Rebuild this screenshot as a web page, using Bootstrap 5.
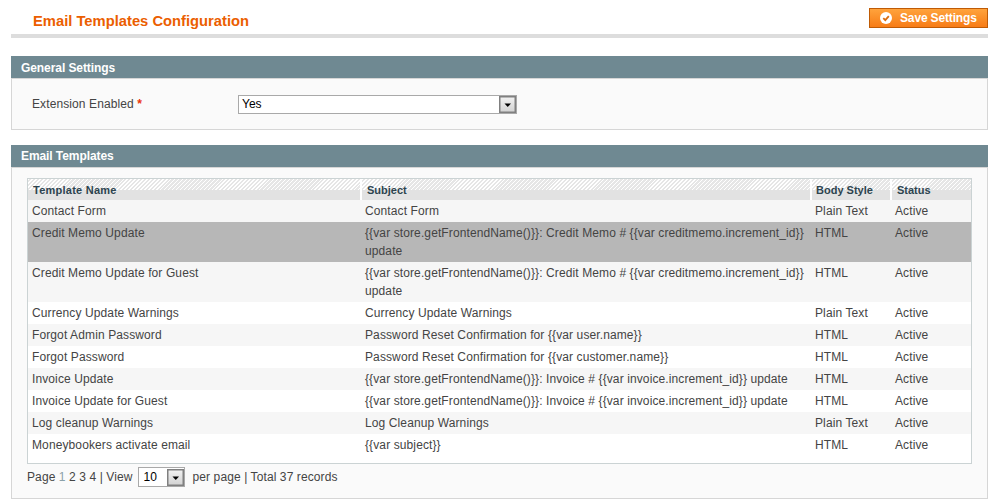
<!DOCTYPE html>
<html lang="en">
<head>
<meta charset="utf-8">
<title>Email Templates Configuration</title>
<link href="https://cdn.jsdelivr.net/npm/bootstrap@5.3.0/dist/css/bootstrap.min.css" rel="stylesheet">
<style>
:root{--pick:url("data:image/svg+xml,%3Csvg xmlns='http://www.w3.org/2000/svg' width='17' height='17'%3E%3Cdefs%3E%3ClinearGradient id='g' x1='0' y1='0' x2='0' y2='1'%3E%3Cstop offset='0' stop-color='%23f2f2f2'/%3E%3Cstop offset='1' stop-color='%23d2d2d2'/%3E%3C/linearGradient%3E%3C/defs%3E%3Crect x='.75' y='.75' width='15.500' height='15.500' fill='url(%23g)' stroke='%23808080' stroke-width='1.500'/%3E%3Cpath d='M5.500 7.500h6.500l-3.250 3.500z' fill='%23000'/%3E%3C/svg%3E");}
html,body{background:#fff;}
body{font-family:"Liberation Sans",Arial,sans-serif;font-size:12px;color:#444;line-height:1.25;}
.page-wrap{padding:0 9px 0 11px;height:502px;overflow:hidden;}
.title-row{height:38px;border-bottom:4px solid #ddd;padding:8px 0 0 22px;}
.title-row h3{font-size:14.75px;font-weight:700;color:#eb5e00;margin:5px 0 0;line-height:17px;}
.save-btn{width:119px;height:20px;padding:0 0 0 10px;border:1px solid #bf5b05;border-radius:0;background:linear-gradient(#ffa33c,#f77c16);color:#fff;font-size:12px;font-weight:700;letter-spacing:-.15px;line-height:18px;display:flex;align-items:center;gap:8px;}
.save-btn:hover{background:linear-gradient(#ffa33c,#f77c16);color:#fff;border-color:#bf5b05;}
.sect-head{height:23px;background:#6f8992;border-bottom:1px solid #d6d6d6;color:#fff;font-weight:700;font-size:12px;letter-spacing:-.08px;line-height:22px;padding-left:10px;}
.sect-body{background:#fafafa;border:1px solid #d6d6d6;border-top:0;}
.first-sect{margin-top:18px;}
.first-sect .sect-head{line-height:24px;}
.first-sect .sect-body{height:51px;padding:16px 0 0 20px;}
.second-sect{margin-top:15px;}
.second-sect .sect-body{height:331px;padding:10px 15px 0 15px;}
.field-label{width:206px;line-height:19px;letter-spacing:.1px;}
.field-label span{color:#eb340a;font-weight:700;}
.pick-select{appearance:none;-webkit-appearance:none;border:1px solid #a9a9a9;border-radius:0;background:#fff var(--pick) no-repeat right 0 center;color:#000;font:12px "Liberation Sans",Arial,sans-serif;padding:0 0 0 3px;outline:0;}
.wide-pick{width:279px;height:19px;line-height:17px;}
.small-pick{width:47px;height:20px;padding-left:5px;margin:0 8px 0 5px;}
.grid-box{border:1px solid #cbd3d4;background:#fff;height:286px;}
.tpl-table{margin:0;table-layout:fixed;width:100%;--bs-table-bg:transparent;--bs-table-color:#444;color:#444;font-size:12px;letter-spacing:.11px;line-height:18px;border-collapse:collapse;}
.tpl-table th{height:21px;padding:1px 0 0 5px;font-size:11px;font-weight:700;color:#2d444f;letter-spacing:0;line-height:20px;border:0;border-left:2px solid #fff;background:linear-gradient(#e2e2e2,#e2e2e2) no-repeat 0 100%/100% 10px,repeating-linear-gradient(135deg,#fff 0 1px,#e6e6e6 1px 2.800px);}
.tpl-table th:first-child{border-left:0;letter-spacing:.25px;}
.tpl-table th:nth-child(3){padding-left:4px;}
.tpl-table td{padding:2px 4px 2px 4px;border:0;vertical-align:top;background:#f6f6f6;box-shadow:none;}
.tpl-table tbody tr:nth-child(even) td{background:#fff;}
.tpl-table tbody tr.row-on td{background:#b7b7b7;}
.pager-row{margin-top:3px;height:20px;display:flex;align-items:center;color:#444;letter-spacing:.1px;}
.pager-row b{font-weight:400;color:#8aa0a8;}
</style>
</head>
<body>
<div class="page-wrap">
  <div class="title-row d-flex justify-content-between align-items-start">
    <h3>Email Templates Configuration</h3>
    <button type="button" class="btn save-btn">
      <svg width="12" height="12" viewBox="0 0 12 12" aria-hidden="true"><circle cx="6" cy="6" r="6" fill="#fff"/><path d="M3.300 6.100l2 2 3.500-4" fill="none" stroke="#d96c10" stroke-width="1.800"/></svg>
      Save Settings
    </button>
  </div>

  <section class="first-sect">
    <div class="sect-head">General Settings</div>
    <div class="sect-body d-flex">
      <div class="field-label">Extension Enabled <span>*</span></div>
      <select class="pick-select wide-pick"><option>Yes</option><option>No</option></select>
    </div>
  </section>

  <section class="second-sect">
    <div class="sect-head">Email Templates</div>
    <div class="sect-body">
      <div class="grid-box">
        <table class="table tpl-table">
          <colgroup><col style="width:333px"><col style="width:450px"><col style="width:80px"><col style="width:80px"></colgroup>
          <thead><tr><th>Template Name</th><th>Subject</th><th>Body Style</th><th>Status</th></tr></thead>
          <tbody>
            <tr><td>Contact Form</td><td>Contact Form</td><td>Plain Text</td><td>Active</td></tr>
            <tr class="row-on"><td>Credit Memo Update</td><td>{{var store.getFrontendName()}}: Credit Memo # {{var creditmemo.increment_id}} update</td><td>HTML</td><td>Active</td></tr>
            <tr><td>Credit Memo Update for Guest</td><td>{{var store.getFrontendName()}}: Credit Memo # {{var creditmemo.increment_id}} update</td><td>HTML</td><td>Active</td></tr>
            <tr><td>Currency Update Warnings</td><td>Currency Update Warnings</td><td>Plain Text</td><td>Active</td></tr>
            <tr><td>Forgot Admin Password</td><td>Password Reset Confirmation for {{var user.name}}</td><td>HTML</td><td>Active</td></tr>
            <tr><td>Forgot Password</td><td>Password Reset Confirmation for {{var customer.name}}</td><td>HTML</td><td>Active</td></tr>
            <tr><td>Invoice Update</td><td>{{var store.getFrontendName()}}: Invoice # {{var invoice.increment_id}} update</td><td>HTML</td><td>Active</td></tr>
            <tr><td>Invoice Update for Guest</td><td>{{var store.getFrontendName()}}: Invoice # {{var invoice.increment_id}} update</td><td>HTML</td><td>Active</td></tr>
            <tr><td>Log cleanup Warnings</td><td>Log Cleanup Warnings</td><td>Plain Text</td><td>Active</td></tr>
            <tr><td>Moneybookers activate email</td><td>{{var subject}}</td><td>HTML</td><td>Active</td></tr>
          </tbody>
        </table>
      </div>
      <div class="pager-row">Page&nbsp;<b>1</b>&nbsp;2 3 4 | View
        <select class="pick-select small-pick"><option>10</option><option>20</option></select>
        per page | Total 37 records</div>
    </div>
  </section>
</div>
<script src="https://cdn.jsdelivr.net/npm/bootstrap@5.3.0/dist/js/bootstrap.bundle.min.js"></script>
</body>
</html>
